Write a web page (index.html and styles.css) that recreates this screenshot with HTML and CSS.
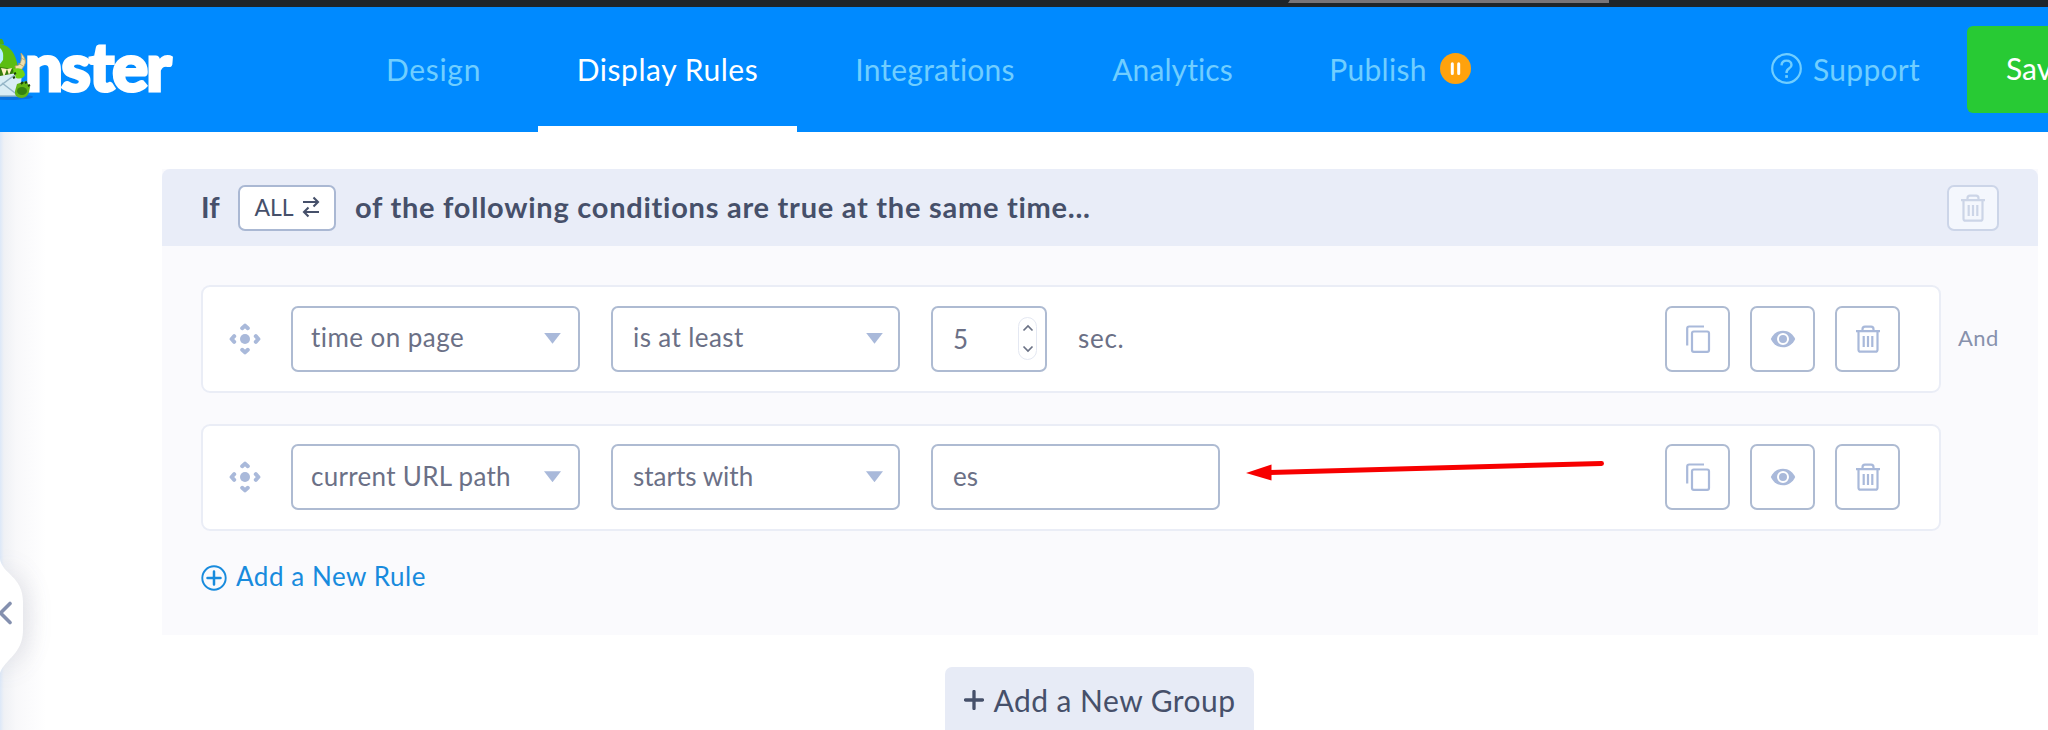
FILE: index.html
```html
<!DOCTYPE html>
<html lang="en">

<head>
    <meta charset="UTF-8">
    <meta name="viewport" content="width=device-width, initial-scale=1.0">
    <title>Display Rules</title>
    <link rel="stylesheet" href="styles.css">
</head>

<body>
    <!-- Shared icons -->
    <svg class="icon-defs" width="0" height="0">
        <symbol id="icon-trash" viewBox="0 0 26 28">
            <path d="M1 6.2h24M7.5 6V4.200q0-2.600 2.400-2.600h6.200q2.400 0 2.400 2.600V6M3.500 6.500v18.200q0 2 2 2h15q2 0 2-2V6.500" fill="none" stroke="currentColor" stroke-width="2.200"/>
            <path d="M8.700 11v11M13 11v11M17.300 11v11" stroke="currentColor" stroke-width="2.200"/>
        </symbol>
        <symbol id="icon-copy" viewBox="0 0 26 28">
            <path d="M19 1.500H4.200q-2 0-2 2V20.500" fill="none" stroke="currentColor" stroke-width="2.200"/>
            <rect x="7" y="6.500" width="17" height="20.300" rx="1.800" fill="none" stroke="currentColor" stroke-width="2.200"/>
        </symbol>
        <symbol id="icon-eye" viewBox="0 0 26 28">
            <path d="M.8 14C3 9 7.500 5.700 13 5.700S23 9 25.200 14C23 19 18.500 22.300 13 22.300S3 19 .8 14z" fill="currentColor"/>
            <circle cx="13" cy="14" r="5" fill="currentColor" stroke="#fff" stroke-width="2"/>
        </symbol>
        <symbol id="icon-move" viewBox="0 0 32 32">
            <circle cx="16" cy="16" r="5" fill="currentColor"/>
            <path d="M13.200 5.200 16 2.600l2.800 2.600M13.200 26.800l2.800 2.600 2.800-2.600M5.200 13.200 2.600 16l2.600 2.800M26.800 13.200l2.600 2.800-2.600 2.800" fill="none" stroke="currentColor" stroke-width="4" stroke-linecap="round" stroke-linejoin="round"/>
        </symbol>
    </svg>

    <div class="top-strip"><div class="strip-tab"></div></div>

    <header>
        <div class="logo">
            <svg class="monster" width="34" height="66" viewBox="0 0 34 66">
                <ellipse cx="8" cy="61" rx="25" ry="3" fill="#0870dc"/>
                <path d="M0 3q3-1 4 5l-4 1z" fill="#4cae12"/>
                <path d="M0 8Q15 10 18 32L12 46H0z" fill="#5bbd12"/>
                <path d="M15 30q8 0 6-13 7 7 3 13-4 7-8 4z" fill="#efe0ad" stroke="#b69f60" stroke-width=".8"/>
                <path d="M18 27l5 3M21 22l4 2" stroke="#b69f60" stroke-width=".8"/>
                <path d="M0 12q4 3 3 12l-3 4z" fill="#b9efff"/>
                <path d="M0 31l14 2-3 9H0z" fill="#377d0b"/>
                <path d="M1 32l6 1-3 8zM7 33l5-1-3 7z" fill="#fff1c4"/>
                <path d="M0 40l22-4-2 24H0z" fill="#d9edf5"/>
                <path d="M0 50l16-12M2 47l17 13M0 60h20" fill="none" stroke="#94b5c7" stroke-width="1.500"/>
                <path d="M13 33q11-3 12 6-3 5-9 3z" fill="#70d314"/>
                <path d="M17 48l9-3 4 6q-1 11-8 11-8 0-7-7z" fill="#62b616"/>
                <ellipse cx="22" cy="55" rx="5" ry="4" fill="#34820f"/>
                <path d="M21 48l2-2M25 47l2-1M28 50l2-1M14 38l2-1M13 42l2-1" stroke="#193d0b" stroke-width="2"/>
            </svg>
            <span class="logo-text">nster</span>
        </div>
        <nav>
            <a class="tab tab-design">Design</a>
            <a class="tab tab-rules active">Display Rules</a>
            <a class="tab tab-integrations">Integrations</a>
            <a class="tab tab-analytics">Analytics</a>
            <a class="tab tab-publish">Publish
                <svg width="31" height="31" viewBox="0 0 31 31">
                    <circle cx="15.500" cy="15.500" r="15.500" fill="#ffa20d"/>
                    <path d="M12.300 10.800v9.800M18.700 10.800v9.800" stroke="#fff" stroke-width="3" stroke-linecap="round"/>
                </svg>
            </a>
        </nav>
        <a class="support">
            <svg width="31" height="31" viewBox="0 0 31 31" fill="none" stroke="currentColor" stroke-width="2.200">
                <circle cx="15.500" cy="15.500" r="14.300"/>
                <path d="M10.500 12.300Q10.800 7.600 15.500 7.600T20.500 12Q20.500 14 18 15.600T15.500 20" stroke-width="2.400"/>
                <path d="M14.200 23.500h2.700" stroke-width="2.700"/>
            </svg>
            <span>Support</span>
        </a>
        <button class="save-btn">Save</button>
    </header>

    <main>
        <section class="group">
            <div class="group-header">
                <strong class="if">If</strong>
                <button class="all-btn">
                    <span>ALL</span>
                    <svg width="18" height="22" viewBox="0 0 18 22" fill="none" stroke="currentColor" stroke-width="2.100">
                        <path d="M1 6h15M11.500 1.500 16 6l-4.500 4.500M17 16H2M6.500 11.500 2 16l4.500 4.500"/>
                    </svg>
                </button>
                <strong class="condition">of the following conditions are true at the same time...</strong>
                <button class="group-delete"><svg width="26" height="28"><use href="#icon-trash"/></svg></button>
            </div>

            <div class="rules">
                <div class="rule-row">
                    <div class="rule">
                        <svg class="move" width="32" height="32"><use href="#icon-move"/></svg>
                        <div class="field select"><span class="t-time">time on page</span><i class="caret"></i></div>
                        <div class="field select second"><span class="t-least">is at least</span><i class="caret"></i></div>
                        <div class="field number">
                            <span>5</span>
                            <div class="spinner">
                                <svg width="12" height="31" viewBox="0 0 12 31" fill="none" stroke="#6b7285" stroke-width="1.700"><path d="M1.500 7.500 6 3l4.500 4.500M1.500 23.500 6 28l4.500-4.500"/></svg>
                            </div>
                        </div>
                        <span class="unit">sec.</span>
                        <div class="actions">
                            <button><svg width="26" height="28"><use href="#icon-copy"/></svg></button>
                            <button><svg width="26" height="28"><use href="#icon-eye"/></svg></button>
                            <button><svg width="26" height="28"><use href="#icon-trash"/></svg></button>
                        </div>
                    </div>
                    <span class="and">And</span>
                </div>

                <div class="rule-row">
                    <div class="rule">
                        <svg class="move" width="32" height="32"><use href="#icon-move"/></svg>
                        <div class="field select"><span class="t-url">current URL path</span><i class="caret"></i></div>
                        <div class="field select second"><span class="t-starts">starts with</span><i class="caret"></i></div>
                        <div class="field path"><span>es</span></div>
                        <div class="actions">
                            <button><svg width="26" height="28"><use href="#icon-copy"/></svg></button>
                            <button><svg width="26" height="28"><use href="#icon-eye"/></svg></button>
                            <button><svg width="26" height="28"><use href="#icon-trash"/></svg></button>
                        </div>
                        <!-- Arrow pointing at the path field -->
                        <svg class="arrow" width="360" height="24" viewBox="0 0 360 24">
                            <path d="M22 12.500 355.500 3.500" stroke="#f70000" stroke-width="5" stroke-linecap="round"/>
                            <path d="M0 13 25.500 4.500V20.500z" fill="#f70000"/>
                        </svg>
                    </div>
                </div>

                <a class="add-rule">
                    <svg width="26" height="26" viewBox="0 0 26 26" fill="none" stroke="currentColor">
                        <circle cx="13" cy="13" r="11.700" stroke-width="1.900"/>
                        <path d="M13 6.500v13M6.500 13h13" stroke-width="2.500" stroke-linecap="round"/>
                    </svg>
                    <span>Add a New Rule</span>
                </a>
            </div>
        </section>

        <button class="add-group">
            <svg width="20" height="20" viewBox="0 0 20 20"><path d="M10 1.500v17M1.500 10h17" stroke="currentColor" stroke-width="3.300" stroke-linecap="round"/></svg>
            <span>Add a New Group</span>
        </button>
    </main>

    <!-- Edge of the side panel -->
    <div class="side-edge"></div>
    <svg class="side-handle" width="60" height="150" viewBox="0 0 60 150">
        <path d="M-20 15H0C2 30 23 32 23 58V86C23 110 5 115 0 129H-20z" fill="#fff"/>
        <path d="M10 59.500 0.500 69 10 78.500" fill="none" stroke="#8490af" stroke-width="3.600" stroke-linecap="round"/>
    </svg>
</body>

</html>
```
FILE: styles.css
```css
/* Reset default margin and padding */
* {
    margin: 0;
    padding: 0;
    box-sizing: border-box;
}

/* Body styles */
body {
    font-family: Lato, "Liberation Sans", sans-serif;
    font-variant-ligatures: none;
    background-color: #fff;
    color: #6b7086;
    position: relative;
    height: 730px;
    overflow: hidden;
}

button {
    font-family: inherit;
    background: #fff;
    border: none;
}

svg {
    display: block;
    flex-shrink: 0;
}

.icon-defs {
    position: absolute;
}

.top-strip {
    height: 7px;
    background-color: #1e252b;
}

.strip-tab {
    width: 321px;
    height: 3px;
    margin-left: 1288px;
    background-color: #777478;
    clip-path: polygon(2px 0, 100% 0, 100% 100%, 0 100%);
}

/* Header styles */
header {
    display: flex;
    height: 125px;
    background-color: #008aff;
    color: #70ceff;
    font-size: 30px;
}

.logo {
    display: flex;
    flex-shrink: 0;
    width: 347px;
    padding-top: 29px;
    position: relative;
}

.logo-text {
    position: absolute;
    left: 25px;
    top: 18px;
    font-size: 67px;
    line-height: 80px;
    font-weight: 900;
    letter-spacing: -1.800px;
    color: #fff;
    -webkit-text-stroke: 3px #fff;
}

.monster {
    position: relative;
    z-index: 1;
}

nav {
    display: flex;
    flex-shrink: 0;
    gap: 18px;
}

.tab {
    display: flex;
    align-items: center;
    justify-content: center;
    gap: 13px;
    padding-bottom: 2px;
    white-space: nowrap;
}

.tab.active {
    color: #fff;
    box-shadow: inset 0 -6px #fff;
}

.tab-design {
    width: 173px;
    letter-spacing: 0.700px;
}

.tab-rules {
    width: 259px;
    letter-spacing: 0.550px;
}

.tab-integrations {
    width: 240px;
    letter-spacing: 0.200px;
}

.tab-analytics {
    width: 199px;
    letter-spacing: 0.100px;
}

.tab-publish {
    width: 220px;
    letter-spacing: 0.300px;
}

.support {
    display: flex;
    flex-shrink: 0;
    align-items: center;
    gap: 11px;
    width: 196px;
    margin-left: 261px;
    padding-bottom: 2px;
    letter-spacing: 0.300px;
}

.save-btn {
    flex-shrink: 0;
    width: 130px;
    height: 87px;
    margin-top: 19px;
    padding: 0 0 3px 39px;
    border-radius: 6px;
    background-color: #28ca34;
    color: #fff;
    font-size: 30px;
    text-align: left;
}

/* Condition group styles */
main {
    padding: 37px 10px 0 162px;
}

.group {
    height: 466px;
    background-color: #fafafd;
}

.group-header {
    display: flex;
    align-items: center;
    height: 77px;
    padding: 0 39px;
    border-radius: 8px 8px 0 0;
    background-color: #e9edf8;
    color: #46506a;
    font-size: 29px;
}

.if {
    width: 37px;
    padding-bottom: 2px;
}

.all-btn {
    display: flex;
    align-items: center;
    justify-content: center;
    gap: 8px;
    width: 98px;
    height: 46px;
    padding-bottom: 2px;
    border: 2px solid #aab8d3;
    border-radius: 7px;
    color: #46506a;
    font-size: 23px;
}

.condition {
    margin-left: 19px;
    padding-bottom: 2px;
    letter-spacing: 0.740px;
}

.group-delete {
    display: flex;
    align-items: center;
    justify-content: center;
    width: 52px;
    height: 46px;
    margin-left: auto;
    border: 2px solid #ccd5e8;
    border-radius: 7px;
    background-color: #f4f7fd;
    color: #ccd5e7;
}

.rules {
    padding: 39px 39px 0;
}

.rule-row {
    display: flex;
    align-items: center;
    margin-bottom: 31px;
}

.rule {
    position: relative;
    display: flex;
    align-items: center;
    width: 1740px;
    height: 107.500px;
    padding: 0 39px 0 26px;
    border: 2px solid #eaedf6;
    border-radius: 9px;
    background-color: #fff;
    font-size: 26px;
}

.move {
    margin-right: 30px;
    color: #a9b9da;
}

.field {
    display: flex;
    align-items: center;
    height: 66px;
    padding: 0 17px 3px 18px;
    border: 2px solid #aebbd2;
    border-radius: 7px;
    white-space: nowrap;
}

.select {
    justify-content: space-between;
    width: 289px;
    margin-right: 31px;
}

.second {
    padding-left: 20px;
    padding-right: 15px;
}

.t-time {
    letter-spacing: 0.450px;
}

.t-least {
    letter-spacing: 0.400px;
}

.t-url {
    letter-spacing: 0.300px;
}

.caret {
    width: 17px;
    height: 11px;
    margin-top: 2px;
    background-color: #a9b9da;
    clip-path: polygon(0 0, 100% 0, 50% 100%);
}

.number {
    justify-content: space-between;
    width: 116px;
    padding: 0 8px 0 20px;
}

.spinner {
    display: flex;
    align-items: center;
    justify-content: center;
    width: 19px;
    height: 43px;
    border: 1.500px solid #e4e8f2;
    border-radius: 10px;
}

.path {
    width: 289px;
    padding-left: 20px;
}

.unit {
    margin-left: 31px;
    padding-bottom: 2px;
    letter-spacing: 0.700px;
}

.actions {
    display: flex;
    gap: 20px;
    margin-left: auto;
}

.actions button {
    display: flex;
    align-items: center;
    justify-content: center;
    width: 65px;
    height: 66px;
    border: 2px solid #aebbd2;
    border-radius: 7px;
    color: #a9b9da;
}

.and {
    margin-left: 17px;
    padding-bottom: 3px;
    color: #8791ac;
    font-size: 22px;
    letter-spacing: 0.400px;
}

.arrow {
    position: absolute;
    left: 1043px;
    top: 34px;
}

.add-rule {
    display: flex;
    align-items: center;
    gap: 9px;
    width: 260px;
    margin-top: -2px;
    color: #188bdd;
    font-size: 26px;
    letter-spacing: 0.550px;
}

.add-rule span {
    padding-bottom: 3px;
}

.add-group {
    display: flex;
    align-items: center;
    justify-content: center;
    gap: 10px;
    width: 309px;
    height: 75px;
    margin: 32px 0 0 783px;
    padding-bottom: 9px;
    border-radius: 7px;
    background-color: #e7ebf6;
    color: #46506a;
    font-size: 30px;
    letter-spacing: 0.450px;
}

/* Side panel styles */
.side-edge {
    position: absolute;
    left: 0;
    top: 132px;
    width: 48px;
    height: 598px;
    background: linear-gradient(90deg, #dce8f8 0, #eff1f5 4px, #f8f8fa 16px, #fff 46px);
}

.side-handle {
    position: absolute;
    left: 0;
    top: 544px;
    filter: drop-shadow(4px 2px 12px rgba(60, 70, 100, 0.160));
}
```
